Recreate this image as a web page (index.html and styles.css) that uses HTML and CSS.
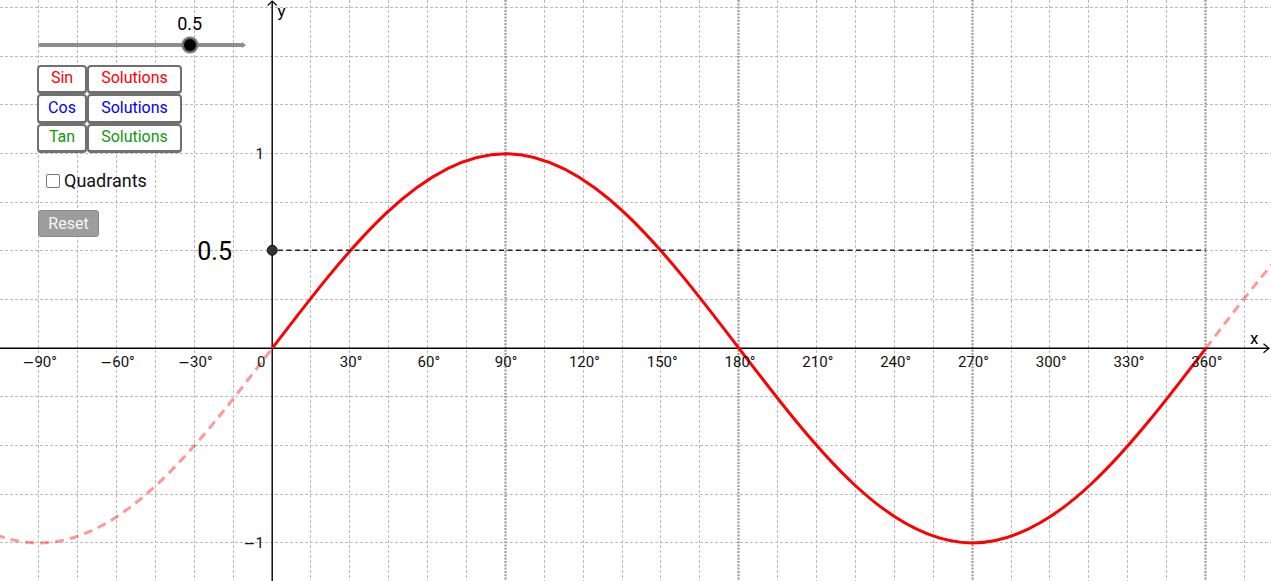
FILE: index.html
```html
<!DOCTYPE html>
<html lang="en">
<head>
<meta charset="utf-8">
<title>Sine solutions</title>
<link rel="stylesheet" href="styles.css">
</head>
<body>
<div class="applet">
  <svg class="graph" width="1271" height="581" viewBox="0 0 1271 581">
    <path class="grid" d="M38.5 0V581M77.5 0V581M116.5 0V581M155.5 0V581M194.5 0V581M233.5 0V581M310.5 0V581M349.5 0V581M388.5 0V581M427.5 0V581M466.5 0V581M544.5 0V581M583.5 0V581M622.5 0V581M660.5 0V581M699.5 0V581M777.5 0V581M816.5 0V581M855.5 0V581M894.5 0V581M933.5 0V581M1011.5 0V581M1049.5 0V581M1088.5 0V581M1127.5 0V581M1166.5 0V581M1244.5 0V581"/>
    <path class="grid" d="M0 7.5H1271M0 56.5H1271M0 104.5H1271M0 153.5H1271M0 202.5H1271M0 250.5H1271M0 299.5H1271M0 396.5H1271M0 445.5H1271M0 494.5H1271M0 542.5H1271"/>
    <path class="mark-line" d="M505.5 0V581M738.5 0V581M972.5 0V581M1205.5 0V581"/>
    <path class="axis" d="M0 348.3H1269M272.2 581V1"/>
    <path class="axis-arrow" d="M1263.5 343.8L1269 348.3L1263.5 352.8M267.7 5.5L272.2 1L276.7 5.5"/>
    <path class="curve-ext" d="M-194.6 348.3C-118.48 447.99 -45.67 542.9 38.8 542.9C123.27 542.9 196.08 447.99 272.2 348.3M1205.8 348.3C1281.92 248.61 1354.73 153.7 1439.2 153.7"/>
    <path class="curve" d="M272.2 348.3C348.32 248.61 421.13 153.7 505.6 153.7C590.07 153.7 662.88 248.61 739 348.3C815.12 447.99 887.93 542.9 972.4 542.9C1056.87 542.9 1129.68 447.99 1205.8 348.3"/>
    <path class="level" d="M278 250.3H1205.8"/>
    <circle class="level-point" cx="272.2" cy="250.3" r="5"/>
    <text class="level-label" x="232" y="260">0.5</text>

    <text class="tick" x="39.8" y="366.5"><tspan class="minus">−</tspan>90°</text>
    <text class="tick" x="117.6" y="366.5"><tspan class="minus">−</tspan>60°</text>
    <text class="tick" x="195.4" y="366.5"><tspan class="minus">−</tspan>30°</text>
    <text class="tick tick-end" x="265.5" y="366.5">0</text>
    <text class="tick" x="351" y="366.5">30°</text>
    <text class="tick" x="428.8" y="366.5">60°</text>
    <text class="tick" x="506" y="366.5">90°</text>
    <text class="tick" x="584.4" y="366.5">120°</text>
    <text class="tick" x="662.2" y="366.5">150°</text>
    <text class="tick" x="740" y="366.5">180°</text>
    <text class="tick" x="817.8" y="366.5">210°</text>
    <text class="tick" x="895.6" y="366.5">240°</text>
    <text class="tick" x="973.4" y="366.5">270°</text>
    <text class="tick" x="1051.2" y="366.5">300°</text>
    <text class="tick" x="1129" y="366.5">330°</text>
    <text class="tick" x="1206.8" y="366.5">360°</text>
    <text class="tick tick-end" x="264" y="159.3">1</text>
    <text class="tick tick-end" x="264" y="547.7"><tspan class="minus">−</tspan>1</text>
    <text class="axis-name" x="1250" y="344">x</text>
    <text class="axis-name" x="277.5" y="17">y</text>
  </svg>

  <div class="controls">
    <div class="slider">
      <div class="slider-track">
        <div class="slider-thumb" style="left: 74%"><span class="slider-value">0.5</span></div>
      </div>
    </div>

    <div class="button-grid">
      <button class="btn btn-red">Sin</button>
      <button class="btn btn-red">Solutions</button>
      <button class="btn btn-blue">Cos</button>
      <button class="btn btn-blue">Solutions</button>
      <button class="btn btn-green">Tan</button>
      <button class="btn btn-green">Solutions</button>
    </div>

    <label class="check-row"><span class="check-box"></span><span class="check-text">Quadrants</span></label>

    <button class="reset">Reset</button>
  </div>
</div>
</body>
</html>
```

FILE: styles.css
```css
html, body {
  margin: 0;
  padding: 0;
  background: #ffffff;
}

body {
  font-family: Roboto, "Liberation Sans", sans-serif;
  overflow: hidden;
}

.applet {
  position: relative;
  width: 1271px;
  height: 581px;
  overflow: hidden;
  background: #ffffff;
}

.graph {
  display: block;
}

.grid {
  fill: none;
  stroke: #bababa;
  stroke-width: 1;
  stroke-dasharray: 3 2;
}

.mark-line {
  fill: none;
  stroke: #9c9c9c;
  stroke-width: 2.2;
  stroke-dasharray: 2 1.3;
}

.axis {
  fill: none;
  stroke: #000000;
  stroke-width: 1.4;
}

.axis-arrow {
  fill: none;
  stroke: #000000;
  stroke-width: 1.2;
}

.curve {
  fill: none;
  stroke: #ff0000;
  stroke-width: 3;
}

.curve-ext {
  fill: none;
  stroke: rgba(255, 0, 0, 0.4);
  stroke-width: 3;
  stroke-dasharray: 9 6;
}

.level {
  fill: none;
  stroke: #222222;
  stroke-width: 1.5;
  stroke-dasharray: 5 3.5;
}

.level-point {
  fill: #333333;
  stroke: #111111;
  stroke-width: 1;
}

.level-label {
  font-family: Roboto, "Liberation Sans", sans-serif;
  font-size: 25px;
  fill: #000000;
  text-anchor: end;
}

.tick {
  font-family: Roboto, "Liberation Sans", sans-serif;
  font-size: 15px;
  fill: #111111;
  text-anchor: middle;
}

.minus {
  font-family: "DejaVu Sans", "Liberation Sans", sans-serif;
  font-size: 14px;
}

.tick-end {
  text-anchor: end;
}

.axis-name {
  font-family: Roboto, "Liberation Sans", sans-serif;
  font-size: 17px;
  fill: #000000;
}

/* Controls overlaid on the graph */
.controls {
  position: absolute;
  left: 37px;
  top: 12px;
  display: flex;
  flex-direction: column;
  align-items: flex-start;
}

.slider {
  width: 205px;
  margin-left: 1px;
  padding-top: 31px;
}

.slider-track {
  position: relative;
  height: 4px;
  border-radius: 2px;
  background: #8c8c8c;
}

.slider-track::after {
  content: "";
  position: absolute;
  right: -3px;
  top: -1px;
  border-left: 4px solid #8c8c8c;
  border-top: 3px solid transparent;
  border-bottom: 3px solid transparent;
}

.slider-thumb {
  position: absolute;
  top: 50%;
  width: 12px;
  height: 12px;
  border-radius: 50%;
  background: #000000;
  transform: translate(-50%, -50%);
  box-shadow: 0 0 0 2px #6a6a6a, 0 0 0 3px rgba(140, 140, 140, 0.55);
}

.slider-value {
  position: absolute;
  left: 50%;
  bottom: 100%;
  margin-bottom: 5px;
  transform: translateX(-50%);
  font-size: 18px;
  line-height: 21px;
  color: #000000;
  white-space: nowrap;
}

.button-grid {
  margin-top: 17.5px;
  display: grid;
  grid-template-columns: 50px 95px;
  grid-auto-rows: 29.5px;
  gap: 0;
}

.btn {
  box-sizing: border-box;
  margin: 0;
  padding: 0 0 2px 0;
  background: #ffffff;
  border: 2px solid #707070;
  border-bottom-width: 3px;
  border-radius: 4px;
  font-family: Roboto, "Liberation Sans", sans-serif;
  font-size: 16px;
  line-height: 19px;
  display: flex;
  align-items: center;
  justify-content: center;
}

.btn-red { color: #ff0000; }
.btn-blue { color: #0000ff; }
.btn-green { color: #0f990f; }

.check-row {
  margin-top: 17px;
  margin-left: 9px;
  height: 21px;
  display: flex;
  align-items: center;
  gap: 4px;
}

.check-box {
  box-sizing: border-box;
  width: 14px;
  height: 14px;
  border: 1px solid #777777;
  border-radius: 2px;
  background: #ffffff;
}

.check-text {
  font-size: 18px;
  line-height: 21px;
  color: #111111;
}

.reset {
  box-sizing: border-box;
  margin: 19px 0 0 1px;
  padding: 0;
  width: 61px;
  height: 27px;
  background: #9d9d9d;
  border: 1px solid #8a8a8a;
  border-radius: 3px;
  color: #f6f6f6;
  font-family: Roboto, "Liberation Sans", sans-serif;
  font-size: 16px;
  line-height: 19px;
}
```
